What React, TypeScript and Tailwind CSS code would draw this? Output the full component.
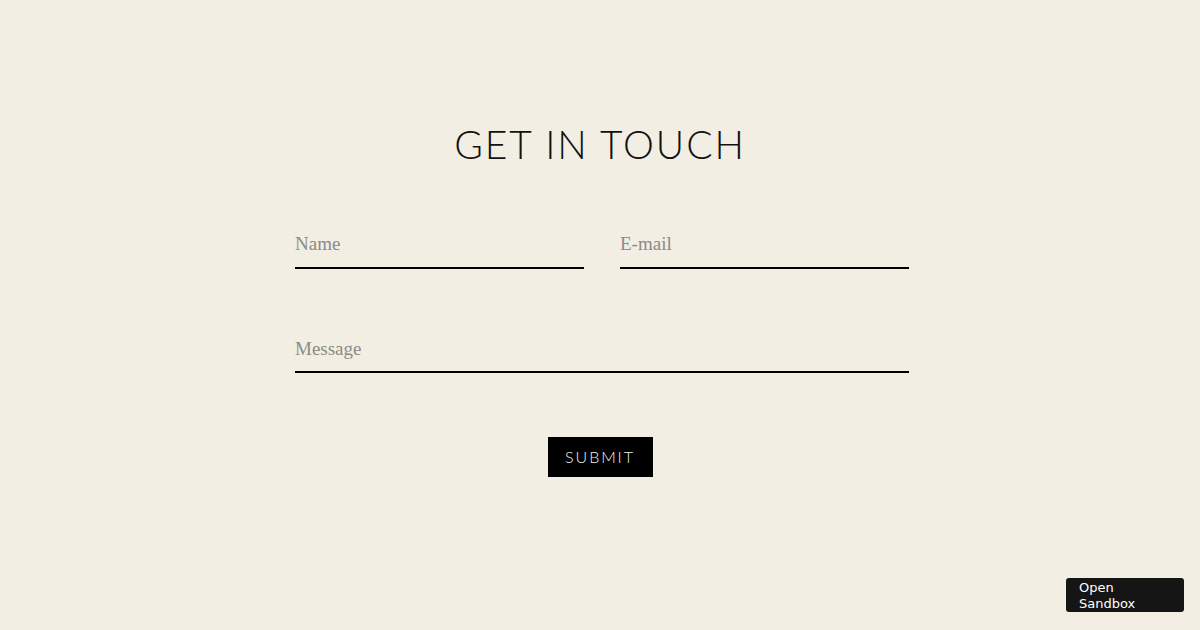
import React from "react";

const App = () => {
  return (
    <div className="relative min-h-[630px] w-full bg-[#f2eee3]">
      <div className="flex flex-col items-center pt-[118px]">
        <h1 className="font-['Lato',sans-serif] text-[39px] font-light leading-[52px] tracking-[0.05em] text-[#111]">
          GET IN TOUCH
        </h1>
        <form className="mt-[60px] ml-[4px] flex w-[614px] flex-col">
          <div className="flex gap-[36px]">
            <input
              placeholder="Name"
              className="w-full border-b-2 border-black bg-transparent pb-[8px] font-['Liberation_Serif',serif] text-[19px] text-black outline-none placeholder:text-[#8b8b87]"
            />
            <input
              placeholder="E-mail"
              className="w-full border-b-2 border-black bg-transparent pb-[8px] font-['Liberation_Serif',serif] text-[19px] text-black outline-none placeholder:text-[#8b8b87]"
            />
          </div>
          <input
            placeholder="Message"
            className="mt-[66px] w-full border-b-2 border-black bg-transparent pb-[8px] font-['Liberation_Serif',serif] text-[19px] text-black outline-none placeholder:text-[#8b8b87]"
          />
        </form>
        <button className="mt-[64px] h-[40px] w-[105px] bg-black font-['Lato',sans-serif] text-[16px] font-light tracking-[0.12em] text-[#f0f0f0]">
          SUBMIT
        </button>
      </div>
      <div className="absolute bottom-[18px] right-[16px] h-[34px] w-[118px] rounded-[3px] bg-[#151515] px-[13px] pt-[2px] font-['DejaVu_Sans',sans-serif] text-[13px] leading-[16px] text-white">
        Open
        <br />
        Sandbox
      </div>
    </div>
  );
};

export default App;
